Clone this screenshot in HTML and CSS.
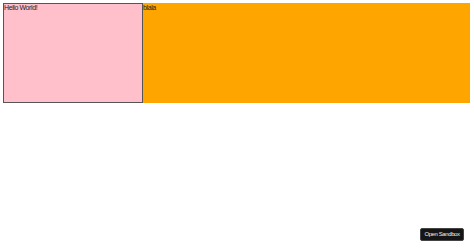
FILE: index.html
```html
<!DOCTYPE html>
<html>
<head>
<meta charset="utf-8">
<link rel="stylesheet" href="styles.css">
</head>
<body>
<div class="row">
  <div class="box">Hello World!</div>
  <div class="fill">blala</div>
</div>
<button class="sandbox">Open Sandbox</button>
</body>
</html>
```

FILE: styles.css
```css
html, body {
  background: #ffffff;
}
body {
  margin: 3px 4px 0 3px;
  font-family: "Liberation Sans", Arial, sans-serif;
  font-size: 7px;
  letter-spacing: -0.4px;
  color: #222;
}
.row {
  display: flex;
  height: 100px;
}
.box {
  box-sizing: border-box;
  width: 140px;
  height: 100px;
  background: #ffc0cb;
  border: 1px solid #555;
  line-height: 7px;
}
.fill {
  flex: 1;
  background: #ffa500;
  line-height: 9px;
}
.sandbox {
  position: fixed;
  right: 10px;
  bottom: 7px;
  box-sizing: border-box;
  width: 44px;
  height: 13px;
  padding: 0;
  background: #151515;
  color: #f0f0f0;
  border: 1px solid #444;
  border-radius: 2px;
  font-family: "Liberation Sans", Arial, sans-serif;
  font-size: 6px;
  letter-spacing: -0.4px;
  line-height: 11px;
  text-align: center;
}
```
